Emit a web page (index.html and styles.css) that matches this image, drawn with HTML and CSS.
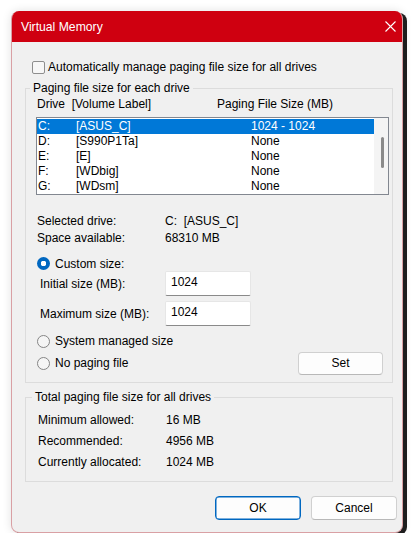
FILE: index.html
```html
<!DOCTYPE html>
<html>
<head>
<meta charset="utf-8">
<link rel="stylesheet" href="styles.css">
</head>
<body>
<div class="window">
  <div class="titlebar">
    <span class="title">Virtual Memory</span>
    <svg class="close" width="11" height="11" viewBox="0 0 11 11"><path d="M0.5 0.5 L10.5 10.5 M10.5 0.5 L0.5 10.5" stroke="#fff" stroke-width="1.1" fill="none"/></svg>
  </div>
  <div class="body">
    <div class="check-row"><span class="checkbox"></span><span>Automatically manage paging file size for all drives</span></div>

    <fieldset class="group drives">
      <legend>Paging file size for each drive</legend>
      <div class="list-head"><span class="h1">Drive&nbsp; [Volume Label]</span><span>Paging File Size (MB)</span></div>
      <div class="listbox">
        <div class="rows">
          <div class="row selected"><span>C:</span><span>[ASUS_C]</span><span>1024 - 1024</span></div>
          <div class="row"><span>D:</span><span>[S990P1Ta]</span><span>None</span></div>
          <div class="row"><span>E:</span><span>[E]</span><span>None</span></div>
          <div class="row"><span>F:</span><span>[WDbig]</span><span>None</span></div>
          <div class="row"><span>G:</span><span>[WDsm]</span><span>None</span></div>
        </div>
        <div class="scrollbar"><div class="thumb"></div></div>
      </div>

      <div class="info">
        <span>Selected drive:</span><span>C:&nbsp; [ASUS_C]</span>
        <span>Space available:</span><span>68310 MB</span>
      </div>

      <div class="radio-row custom"><span class="radio on"></span><span>Custom size:</span></div>
      <div class="field-row first"><span class="flabel">Initial size (MB):</span><span class="textbox">1024</span></div>
      <div class="field-row"><span class="flabel">Maximum size (MB):</span><span class="textbox">1024</span></div>
      <div class="radio-row system"><span class="radio"></span><span>System managed size</span></div>
      <div class="set-row">
        <div class="radio-row"><span class="radio"></span><span>No paging file</span></div>
        <span class="btn set">Set</span>
      </div>
    </fieldset>

    <fieldset class="group totals">
      <legend>Total paging file size for all drives</legend>
      <div class="totals-grid">
        <span>Minimum allowed:</span><span>16 MB</span>
        <span>Recommended:</span><span>4956 MB</span>
        <span>Currently allocated:</span><span>1024 MB</span>
      </div>
    </fieldset>

    <div class="buttons">
      <span class="btn ok">OK</span>
      <span class="btn">Cancel</span>
    </div>
  </div>
</div>
</body>
</html>
```
FILE: styles.css
```css
* { box-sizing: border-box; }
body {
  margin: 0;
  padding-top: 11px;
  background: #ffffff;
  font-family: "Liberation Sans", Arial, sans-serif;
  font-size: 12px;
  color: #000;
}
.window {
  margin-left: 11px;
  width: 392px;
  height: 522px;
  border-radius: 8px;
  background: #f0f0f0;
  border: 1px solid #d9a0a4;
  border-top: none;
  overflow: hidden;
  box-shadow: 4px 2px 0.5px #1e1e1e, 0 0 10px rgba(0,0,0,0.12);
  display: flex;
  flex-direction: column;
}
.titlebar {
  height: 31px;
  background: #cf0010;
  display: flex;
  align-items: center;
  justify-content: space-between;
  padding: 0 6px 0 9px;
  color: #fff;
  flex: none;
  margin: 0 -1px;
}
.title { font-size: 12.2px; padding-left: 1px; }
.close { display: block; margin-right: 1px; }
.body {
  flex: 1;
  padding: 17px 9px 0 13px;
}
.check-row {
  display: flex;
  align-items: center;
  height: 16px;
  padding-left: 7px;
  gap: 3px;
}
.checkbox {
  width: 13px;
  height: 13px;
  border: 1px solid #8e8e8e;
  border-radius: 2px;
  background: #f7f7f7;
  flex: none;
}
.group {
  margin: 5px 0 0 0;
  border: 1px solid #dcdcdc;
  min-width: 0;
}
.group legend {
  line-height: 16px;
  padding: 0 3px;
  margin-left: -6px;
}
.drives {
  padding: 0 3px 7px 10px;
}
.list-head {
  display: flex;
  height: 16px;
  line-height: 16px;
  padding-left: 1px;
}
.list-head .h1 { width: 180px; }
.listbox {
  margin-top: 5px;
  height: 78px;
  border: 1px solid #828790;
  background: #fff;
  display: flex;
  padding-top: 1px;
}
.rows { flex: 1; }
.row {
  display: grid;
  grid-template-columns: 38px 175px 1fr;
  height: 15px;
  line-height: 15px;
  padding-left: 1px;
}
.row.selected {
  background: #0078d7;
  color: #fff;
}
.scrollbar {
  width: 14px;
  margin-top: -1px;
  background: #f4f4f4;
  display: flex;
  justify-content: center;
  padding-top: 19px;
  padding-left: 2px;
}
.thumb {
  width: 3px;
  height: 31px;
  background: #8a8a8a;
  border-radius: 1.5px;
}
.info {
  margin-top: 18px;
  display: grid;
  grid-template-columns: 128px 1fr;
  line-height: 17px;
  padding-left: 1px;
}
.radio-row {
  display: flex;
  align-items: center;
  gap: 5px;
  padding-left: 1px;
  height: 16px;
}
.radio-row.custom { margin-top: 9px; height: 15px; }
.radio-row.system { margin-top: 7px; }
.radio {
  width: 13px;
  height: 13px;
  border-radius: 50%;
  border: 1px solid #858585;
  background: #f5f5f5;
  flex: none;
}
.radio.on {
  border: none;
  background: radial-gradient(circle, #ffffff 0 2.6px, #0067c0 3px);
}
.field-row {
  display: flex;
  align-items: center;
  height: 25px;
  margin-top: 5px;
}
.field-row.first { margin-top: 0; }
.flabel {
  width: 129px;
  padding-left: 4px;
}
.textbox {
  width: 86px;
  height: 25px;
  background: #fff;
  border: 1px solid #e6e6e6;
  border-bottom: 1px solid #8a8a8a;
  border-radius: 2px;
  padding: 3px 0 0 5px;
  line-height: 15px;
}
.set-row {
  display: flex;
  align-items: center;
  justify-content: space-between;
  margin-top: 2px;
  height: 24px;
  padding-right: 6px;
}
.btn {
  display: flex;
  align-items: center;
  justify-content: center;
  width: 85px;
  height: 23px;
  background: #fdfdfd;
  border: 1px solid #d0d0d0;
  border-bottom-color: #b8b8b8;
  border-radius: 4px;
}
.totals {
  margin-top: 6px;
  padding: 4px 3px 9px 12px;
}
.totals-grid {
  display: grid;
  grid-template-columns: 128px 1fr;
  grid-auto-rows: 21px;
  align-items: center;
}
.buttons {
  display: flex;
  justify-content: flex-end;
  gap: 10px;
  margin-top: 14px;
  margin-right: -4px;
}
.buttons .btn { width: 86px; height: 24px; }
.btn.ok {
  border: 1px solid #0067c0;
  box-shadow: inset 0 0 0 0.5px #0067c0;
}
```
